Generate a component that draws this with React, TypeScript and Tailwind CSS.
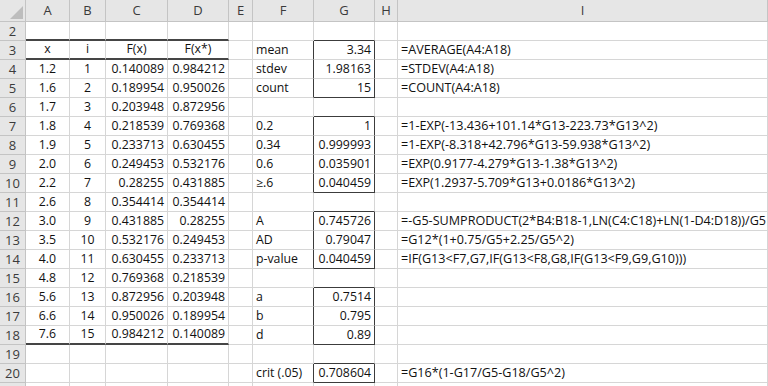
import React from "react";

type Align = "l" | "c" | "r";

interface CellDef {
  text?: string;
  align?: Align;
  darkRight?: boolean;
  bottom?: "dark" | "thick";
  wide?: boolean;
}

const COLS = ["A", "B", "C", "D", "E", "F", "G", "H", "I"];

const data: Record<number, string[]> = {
  3: ["x", "i", "F(x)", "F(x*)", "", "mean", "3.34", "", "=AVERAGE(A4:A18)"],
  4: ["1.2", "1", "0.140089", "0.984212", "", "stdev", "1.98163", "", "=STDEV(A4:A18)"],
  5: ["1.6", "2", "0.189954", "0.950026", "", "count", "15", "", "=COUNT(A4:A18)"],
  6: ["1.7", "3", "0.203948", "0.872956", "", "", "", "", ""],
  7: ["1.8", "4", "0.218539", "0.769368", "", "0.2", "1", "", "=1-EXP(-13.436+101.14*G13-223.73*G13^2)"],
  8: ["1.9", "5", "0.233713", "0.630455", "", "0.34", "0.999993", "", "=1-EXP(-8.318+42.796*G13-59.938*G13^2)"],
  9: ["2.0", "6", "0.249453", "0.532176", "", "0.6", "0.035901", "", "=EXP(0.9177-4.279*G13-1.38*G13^2)"],
  10: ["2.2", "7", "0.28255", "0.431885", "", "≥.6", "0.040459", "", "=EXP(1.2937-5.709*G13+0.0186*G13^2)"],
  11: ["2.6", "8", "0.354414", "0.354414", "", "", "", "", ""],
  12: ["3.0", "9", "0.431885", "0.28255", "", "A", "0.745726", "", "=-G5-SUMPRODUCT(2*B4:B18-1,LN(C4:C18)+LN(1-D4:D18))/G5"],
  13: ["3.5", "10", "0.532176", "0.249453", "", "AD", "0.79047", "", "=G12*(1+0.75/G5+2.25/G5^2)"],
  14: ["4.0", "11", "0.630455", "0.233713", "", "p-value", "0.040459", "", "=IF(G13<F7,G7,IF(G13<F8,G8,IF(G13<F9,G9,G10)))"],
  15: ["4.8", "12", "0.769368", "0.218539", "", "", "", "", ""],
  16: ["5.6", "13", "0.872956", "0.203948", "", "a", "0.7514", "", ""],
  17: ["6.6", "14", "0.950026", "0.189954", "", "b", "0.795", "", ""],
  18: ["7.6", "15", "0.984212", "0.140089", "", "d", "0.89", "", ""],
  20: ["", "", "", "", "", "crit (.05)", "0.708604", "", "=G16*(1-G17/G5-G18/G5^2)"],
};

// rows whose G cell sits inside a boxed block
const boxedRows = [3, 4, 5, 7, 8, 9, 10, 12, 13, 14, 16, 17, 18, 20];
// G cells with a dark bottom edge (top or bottom of a box)
const boxEdgeRows = [2, 5, 6, 10, 11, 14, 15, 18, 19, 20];
// A:D cells with the heavy table rule
const thickRows = [2, 3, 18];

function cellDef(row: number, col: number): CellDef {
  const text = data[row]?.[col] ?? "";
  let align: Align = "l";
  if (col === 0 || col === 1) align = "c";
  else if (col === 2 || col === 3) align = row === 3 ? "c" : "r";
  else if (col === 6) align = "r";
  const def: CellDef = { text, align, wide: col === 8 };
  if ((col === 5 || col === 6) && boxedRows.includes(row)) def.darkRight = true;
  if (col === 6 && boxEdgeRows.includes(row)) def.bottom = "dark";
  if (col <= 3 && thickRows.includes(row)) def.bottom = "thick";
  return def;
}

const Cell: React.FC<CellDef> = ({ text, align, darkRight, bottom, wide }) => {
  const right = darkRight ? "border-r border-r-[#3c3c3c]" : "border-r border-r-[#d6d6d6]";
  const btm =
    bottom === "thick"
      ? "border-b-2 border-b-[#454545]"
      : bottom === "dark"
      ? "border-b border-b-[#3c3c3c]"
      : "border-b border-b-[#d6d6d6]";
  const al = align === "c" ? "justify-center" : align === "r" ? "justify-end pr-[3px]" : "justify-start pl-[3px]";
  const size = wide ? "text-[12.6px]" : "text-[12.3px]";
  return (
    <div className={`h-[19px] flex items-center overflow-visible whitespace-nowrap bg-white text-[#111] ${size} ${right} ${btm} ${al}`}>
      {text}
    </div>
  );
};

export default function App() {
  const rows = Array.from({ length: 19 }, (_, i) => i + 2);
  return (
    <div
      className="w-[768px] h-[386px] overflow-hidden bg-white leading-none"
      style={{ fontFamily: '"Open Sans", "Noto Sans", sans-serif' }}
    >
      <div className="grid grid-cols-[26px_44px_36px_62px_61px_24px_61px_61px_23px_370px]">
        {/* corner */}
        <div className="h-[22px] bg-[#e6e6e6] border-r border-b border-[#c4c4c4] flex items-end justify-end p-[2px]">
          <svg width="13" height="13" viewBox="0 0 13 13">
            <polygon points="13,0 13,13 0,13" fill="#bdbdbd" />
          </svg>
        </div>
        {COLS.map((c) => (
          <div
            key={c}
            className="h-[22px] bg-[#e6e6e6] border-r border-b border-[#c4c4c4] flex items-center justify-center text-[#3b3b3b] text-[13px]"
          >
            {c}
          </div>
        ))}
        {rows.map((r) => (
          <React.Fragment key={r}>
            <div className="h-[19px] bg-[#e6e6e6] border-r border-b border-[#c4c4c4] flex items-center justify-center text-[#3b3b3b] text-[13px]">
              {r}
            </div>
            {COLS.map((_, ci) => (
              <Cell key={ci} {...cellDef(r, ci)} />
            ))}
          </React.Fragment>
        ))}
        {/* partly visible row 21 */}
        <div className="h-[19px] bg-[#e6e6e6] border-r border-[#c4c4c4]" />
        {COLS.map((c) => (
          <div key={c} className="h-[19px] bg-white border-r border-r-[#d6d6d6]" />
        ))}
      </div>
    </div>
  );
}
